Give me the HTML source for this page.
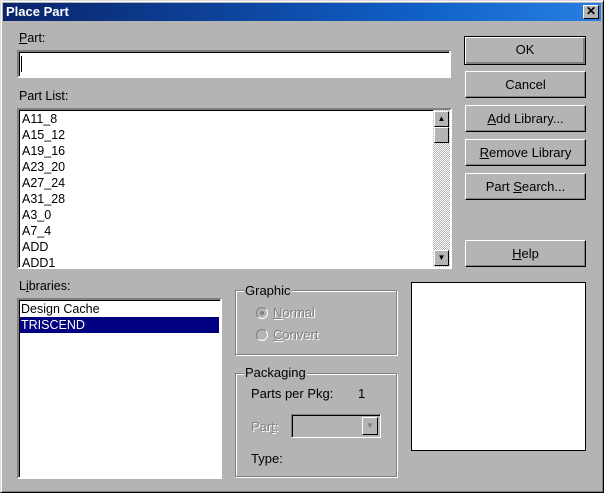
<!DOCTYPE html>
<html><head><style>
*{box-sizing:border-box;margin:0;padding:0}
body{width:604px;height:493px;background:#b4b4b4;font-family:"Liberation Sans",Arial,sans-serif;font-size:12px;color:#000;position:relative;overflow:hidden}
.a{position:absolute}
.win{left:0;top:0;width:604px;height:493px;border:1px solid;border-color:#dcdcdc #000 #000 #dcdcdc;box-shadow:inset 1px 1px 0 #fff,inset -1px -1px 0 #808080}
.title{left:3px;top:3px;width:598px;height:18px;background:linear-gradient(to right,#0a246a,#1060c8 70%,#2880e0);color:#fff;font-weight:bold;font-size:13px;line-height:18px;padding-left:3px}
.x{width:16px;height:14px;background:#b4b4b4;border:1px solid;border-color:#fff #000 #000 #fff;color:#000;font-size:12px;line-height:11px;text-align:center;font-weight:bold}
.sunk{background:#fff;border:2px solid;border-color:#808080 #fff #fff #808080;box-shadow:inset 1px 1px 0 #000}
.btn{width:121px;height:27px;border:1px solid;border-color:#fff #000 #000 #fff;box-shadow:inset -1px -1px 0 #808080;text-align:center;line-height:25px;font-size:13px}
.item{position:absolute;left:2px;height:16px;line-height:16px;font-size:12.5px;padding-left:1px}
.grp{border:1px solid #808080;box-shadow:1px 1px 0 #fff,inset 1px 1px 0 #fff}
.leg{background:#b4b4b4;padding:0 1px;font-size:13px}
.dis{color:#808080;text-shadow:1px 1px 0 #fff}
.sb{width:15px;height:16px;background:#b4b4b4;border:1px solid;border-color:#fff #000 #000 #fff}
.rad{position:absolute;width:12px;height:12px;border-radius:50%;border:1px solid;border-color:#808080 #fff #fff #808080;background:#b4b4b4}
u{text-decoration:underline}
</style></head><body>
<div class="a win"></div>
<div class="a title">Place Part</div>
<div class="a x" style="left:583px;top:5px">✕</div>

<div class="a" style="left:19px;top:31px;font-size:12.5px"><u>P</u>art:</div>
<div class="a sunk" style="left:17px;top:50px;width:434px;height:28px"><div class="a" style="left:2px;top:4px;width:1px;height:16px;background:#000"></div></div>

<div class="a" style="left:19px;top:89px;font-size:12.5px">Part List:</div>
<div class="a sunk" style="left:17px;top:108px;width:435px;height:161px;overflow:hidden">
<div class="item" style="top:1px">A11_8</div>
<div class="item" style="top:17px">A15_12</div>
<div class="item" style="top:33px">A19_16</div>
<div class="item" style="top:49px">A23_20</div>
<div class="item" style="top:65px">A27_24</div>
<div class="item" style="top:81px">A31_28</div>
<div class="item" style="top:97px">A3_0</div>
<div class="item" style="top:113px">A7_4</div>
<div class="item" style="top:129px">ADD</div>
<div class="item" style="top:145px">ADD1</div>
<div class="a" style="left:414px;top:0;width:17px;height:157px;background:repeating-conic-gradient(#fff 0 25%,#b4b4b4 0 50%) 0 0/2px 2px"></div>
<div class="a sb" style="left:415px;top:1px;font-size:8px;text-align:center;line-height:13px">▲</div>
<div class="a sb" style="left:415px;top:17px"></div>
<div class="a sb" style="left:415px;top:140px;font-size:8px;text-align:center;line-height:13px">▼</div>
</div>

<div class="a btn" style="left:464px;top:36px;width:122px;height:29px;border:1px solid #000;box-shadow:inset 1px 1px 0 #fff,inset -2px -2px 0 #808080;line-height:26px">OK</div>
<div class="a btn" style="left:465px;top:71px">Cancel</div>
<div class="a btn" style="left:465px;top:105px"><u>A</u>dd Library...</div>
<div class="a btn" style="left:465px;top:139px"><u>R</u>emove Library</div>
<div class="a btn" style="left:465px;top:173px">Part <u>S</u>earch...</div>
<div class="a btn" style="left:465px;top:240px"><u>H</u>elp</div>

<div class="a" style="left:19px;top:279px;font-size:12.5px">L<u>i</u>braries:</div>
<div class="a sunk" style="left:17px;top:298px;width:205px;height:181px">
<div class="item" style="top:1px;left:1px;width:199px">Design Cache</div>
<div class="item" style="top:17px;left:1px;width:199px;background:#000080;color:#fff">TRISCEND</div>
</div>

<div class="a grp" style="left:235px;top:290px;width:162px;height:65px"></div>
<div class="a leg" style="left:244px;top:283px">Graphic</div>
<div class="rad" style="left:256px;top:307px"><div class="a" style="left:3px;top:3px;width:4px;height:4px;border-radius:50%;background:#808080"></div></div>
<div class="a dis" style="left:273px;top:305px;font-size:13px"><u>N</u>ormal</div>
<div class="rad" style="left:256px;top:329px"></div>
<div class="a dis" style="left:273px;top:327px;font-size:13px"><u>C</u>onvert</div>

<div class="a grp" style="left:235px;top:373px;width:162px;height:104px"></div>
<div class="a leg" style="left:244px;top:365px">Packaging</div>
<div class="a" style="left:251px;top:386px;font-size:13px">Parts per Pkg:</div>
<div class="a" style="left:358px;top:386px;font-size:13px">1</div>
<div class="a dis" style="left:251px;top:419px;font-size:13px">Par<u>t</u>:</div>
<div class="a" style="left:291px;top:414px;width:90px;height:24px;border:1px solid;border-color:#808080 #fff #fff #808080;box-shadow:inset 1px 1px 0 #000"><div class="a sb" style="left:70px;top:2px;width:16px;height:18px;font-size:8px;color:#808080;text-align:center;line-height:16px">▼</div></div>
<div class="a" style="left:251px;top:451px;font-size:13px">Type:</div>

<div class="a" style="left:411px;top:282px;width:175px;height:169px;background:#fff;border:1px solid #000"></div>
</body></html>
